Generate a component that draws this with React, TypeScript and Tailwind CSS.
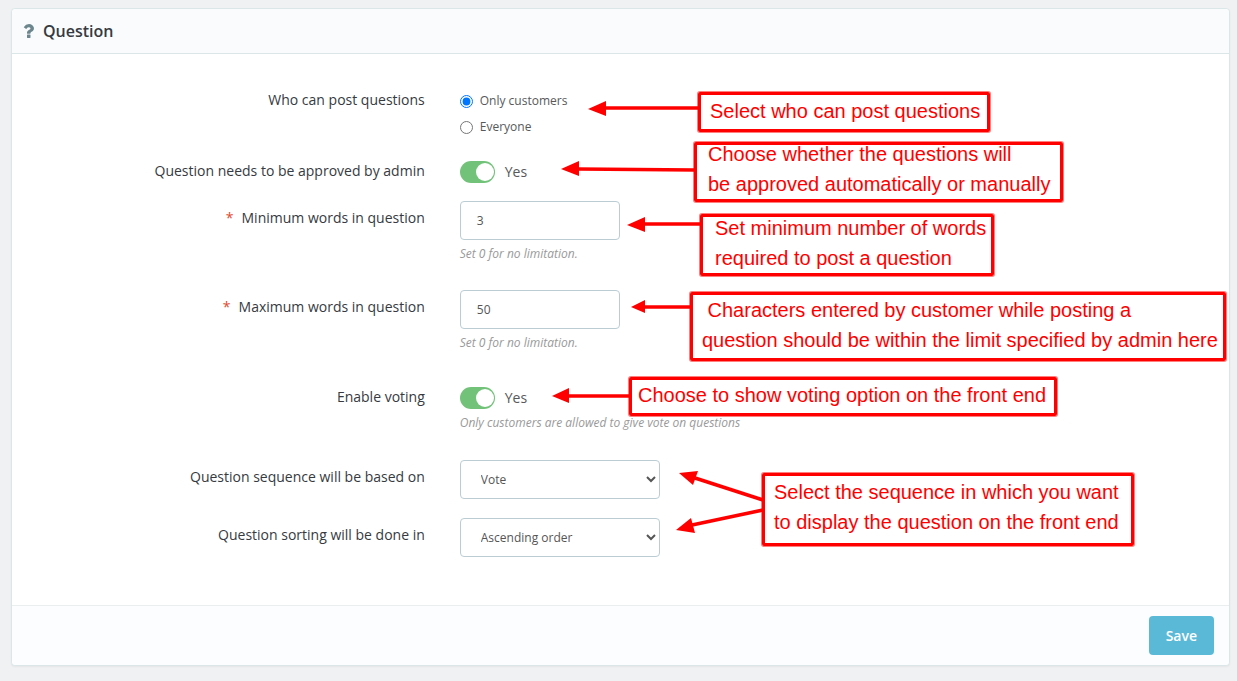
import type { ReactNode } from "react";

type RowProps = {
	label: string;
	htmlFor?: string;
	required?: boolean;
	labelClass?: string;
	className?: string;
	children: ReactNode;
};

const Row = ({ label, htmlFor, required, labelClass, className, children }: RowProps) => (
	<div className={`flex items-start gap-[34px] ${className ?? ""}`}>
		<label
			htmlFor={htmlFor}
			className={`w-[34%] shrink-0 pr-px text-right text-sm leading-5 text-[#363a41] ${labelClass ?? ""}`}
		>
			{required && <span className="mr-2 text-[#e1492f]">*</span>}
			{label}
		</label>
		<div className="grow">{children}</div>
	</div>
);

const Hint = ({ children }: { children: ReactNode }) => (
	<p className="mt-1 text-xs leading-5 text-[#999] italic">{children}</p>
);

const Toggle = ({ id }: { id: string }) => (
	<div className="flex h-[22px] items-center gap-[10px]">
		<input
			id={id}
			type="checkbox"
			role="switch"
			defaultChecked
			className="h-[22px] w-[35px] cursor-pointer appearance-none rounded-full bg-[#a6a6a6] p-0.5 before:block before:size-[18px] before:rounded-full before:bg-white checked:bg-[#72c279] checked:before:ml-[14px]"
		/>
		<span className="text-sm leading-5 text-[#58595b]">Yes</span>
	</div>
);

const WordInput = ({ id, value }: { id: string; value: string }) => (
	<input
		id={id}
		type="text"
		defaultValue={value}
		className="block h-[39px] w-40 rounded border border-[#bbcdd2] bg-white px-4 text-xs text-[#555]"
	/>
);

const Dropdown = ({ id, options }: { id: string; options: string[] }) => (
	<select
		id={id}
		className="block h-[39px] w-50 rounded border border-[#bbcdd2] bg-white pl-4 text-xs text-[#555]"
	>
		{options.map((option) => (
			<option key={option}>{option}</option>
		))}
	</select>
);

const QuestionIcon = () => (
	<svg className="h-[14px] w-[11px] fill-[#6c868e]" viewBox="408 256 996 1280" aria-hidden="true">
		<path d="M1088 1256v240q0 16-12 28t-28 12h-240q-16 0-28-12t-12-28v-240q0-16 12-28t28-12h240q16 0 28 12t12 28zm316-600q0 54-15.5 101t-35 76.5-55 59.5-57.5 43.5-61 35.5q-41 23-68.5 65t-27.5 67q0 17-12 32.5t-28 15.5h-240q-15 0-25.5-18.5t-10.5-37.5v-45q0-83 65-156.5t143-108.5q59-27 84-56t25-76q0-42-46.5-74t-107.5-32q-65 0-108 29-35 25-107 115-13 16-31 16-12 0-25-8l-164-125q-13-10-15.5-25t5.5-28q160-266 464-266 80 0 161 31t146 83 106 127.5 41 158.5z" />
	</svg>
);

const notes = [
	{ box: "left-[698px] top-[92px] w-[292px] h-[40px] pt-px pl-[9px]", lines: ["Select who can post questions"] },
	{
		box: "left-[694px] top-[142px] w-[369px] h-[60px] pl-[11px]",
		text: "-mt-1.5",
		lines: ["Choose whether the questions will", "be approved automatically or manually"],
	},
	{
		box: "left-[700px] top-[214px] w-[294px] h-[62px] pl-[12px]",
		text: "-mt-1",
		lines: ["Set minimum number of words", "required to post a question"],
	},
	{
		box: "left-[690px] top-[292px] w-[536px] h-[69px] pl-[9px]",
		lines: [" Characters entered by customer while posting a", "question should be within the limit specified by admin here"],
	},
	{ box: "left-[629px] top-[377px] w-[428px] h-[39px] pl-[6px]", lines: ["Choose to show voting option on the front end"] },
	{
		box: "left-[762px] top-[473px] w-[372px] h-[73px] pt-px pl-[9px]",
		lines: ["Select the sequence in which you want", "to display the question on the front end"],
	},
];

const arrows = [
	{ line: "M699 108H604", head: "588,109 606,101 606,116" },
	{ line: "M695 170L578 169", head: "561,169 579,161 579,176" },
	{ line: "M701 224H644", head: "627,225 645,217 645,232" },
	{ line: "M691 307H644", head: "631,307 645,300 645,313" },
	{ line: "M630 396H568", head: "552,396 569,388 569,403" },
	{ line: "M763 500L695 478", head: "679,473 698,471 693,485" },
	{ line: "M763 510L692 525", head: "676,530 691,518 695,533" },
];

const Annotations = () => (
	<div className="pointer-events-none absolute inset-0">
		<svg className="absolute top-0 left-0 h-[681px] w-[1237px]" viewBox="0 0 1237 681">
			{arrows.map((arrow) => (
				<g key={arrow.line} fill="#f00">
					<path d={arrow.line} stroke="#f00" strokeWidth="3.5" />
					<polygon points={arrow.head} />
				</g>
			))}
		</svg>
		{notes.map((note) => (
			<div
				key={note.lines[0]}
				className={`absolute rounded-xs border-3 border-[#f00] font-['Liberation_Sans',sans-serif] text-xl leading-[30px] whitespace-pre text-[#f00] shadow-[0_0_0_1px_rgb(255_0_0/0.5)] ${note.box}`}
			>
				<div className={note.text}>
					{note.lines.map((line) => (
						<p key={line}>{line}</p>
					))}
				</div>
			</div>
		))}
	</div>
);

const App = () => {
	return (
		<div className="relative min-h-screen bg-[#eff1f2] pt-2 pr-[7px] pb-[15px] pl-[11px] font-['Open_Sans',sans-serif]">
			<form className="rounded border border-[#dbe6e9] bg-white shadow-xs">
				<h1 className="flex h-[45px] items-center gap-[9px] rounded-t border-b border-[#dbe6e9] bg-[#fafbfc] px-[11px] text-base font-semibold text-[#363a41]">
					<QuestionIcon />
					Question
				</h1>

				<div className="pt-[34px] pb-12">
					<Row label="Who can post questions" labelClass="pt-0.5">
						{["Only customers", "Everyone"].map((option, i) => (
							<label key={option} className="flex h-[26px] items-center gap-[7px] text-xs text-[#58595b]">
								<input type="radio" name="who" defaultChecked={i === 0} className="size-[13px]" />
								{option}
							</label>
						))}
					</Row>
					<Row label="Question needs to be approved by admin" htmlFor="approve" className="mt-[21px]">
						<Toggle id="approve" />
					</Row>
					<Row label="Minimum words in question" htmlFor="min" required className="mt-[18px]" labelClass="pt-[7px]">
						<WordInput id="min" value="3" />
						<Hint>Set 0 for no limitation.</Hint>
					</Row>
					<Row label="Maximum words in question" htmlFor="max" required className="mt-[26px]" labelClass="pt-[7px]">
						<WordInput id="max" value="50" />
						<Hint>Set 0 for no limitation.</Hint>
					</Row>
					<Row label="Enable voting" htmlFor="voting" className="mt-[34px]">
						<Toggle id="voting" />
						<Hint>Only customers are allowed to give vote on questions</Hint>
					</Row>
					<Row label="Question sequence will be based on" htmlFor="sequence" className="mt-[27px]" labelClass="pt-[7px]">
						<Dropdown id="sequence" options={["Vote", "Date"]} />
					</Row>
					<Row label="Question sorting will be done in" htmlFor="sorting" className="mt-[19px]" labelClass="pt-[7px]">
						<Dropdown id="sorting" options={["Ascending order", "Descending order"]} />
					</Row>
				</div>

				<div className="flex justify-end rounded-b border-t border-[#eaeeef] bg-[#fcfdfe] py-[10px] pr-[15px]">
					<button type="button" className="h-[39px] rounded bg-[#5bb9d8] px-[17px] text-sm font-semibold text-white">
						Save
					</button>
				</div>
			</form>
			<Annotations />
		</div>
	);
};

export default App;
